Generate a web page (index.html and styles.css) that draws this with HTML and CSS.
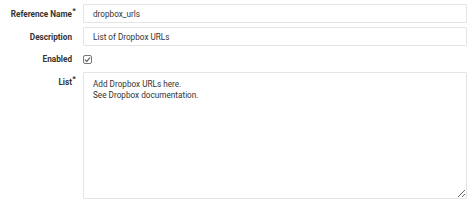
FILE: index.html
```html
<!DOCTYPE html>
<html lang="en">
<head>
    <meta charset="UTF-8">
    <title>Edit Reference</title>
    <link rel="stylesheet" href="styles.css">
</head>
<body>
    <form class="ref-form">
        <label class="field-label" for="ref-name">Reference Name<span class="req">*</span></label>
        <input class="field-input" id="ref-name" type="text" value="dropbox_urls">

        <label class="field-label" for="ref-desc">Description</label>
        <input class="field-input" id="ref-desc" type="text" value="List of Dropbox URLs">

        <label class="field-label" for="ref-enabled">Enabled</label>
        <div class="check-wrap">
            <span class="check-box" id="ref-enabled">
                <svg width="7" height="7" viewBox="0 0 8 8"><path d="M1 4.2 L3.1 6.2 L7 1.8" fill="none" stroke="#555" stroke-width="1.2"/></svg>
            </span>
        </div>

        <label class="field-label top" for="ref-list">List<span class="req">*</span></label>
        <textarea class="field-input field-area" id="ref-list">Add Dropbox URLs here.
See Dropbox documentation.</textarea>
    </form>
</body>
</html>
```

FILE: styles.css
```css
body {
    margin: 0;
    padding: 4px 7px 0 0;
    font-family: Roboto, 'Liberation Sans', sans-serif;
    color: #333;
    background: #fff;
}

.ref-form {
    display: grid;
    grid-template-columns: 76px 1fr;
    column-gap: 7px;
    row-gap: 4px;
}

.field-label {
    font-size: 8.2px;
    font-weight: bold;
    text-align: right;
    white-space: nowrap;
    align-self: center;
    padding-right: 4px;
    position: relative;
}

.field-label.top {
    align-self: start;
    padding-top: 5px;
}

.req {
    position: absolute;
    right: 0;
    top: -3px;
    font-size: 8px;
}

.field-label.top .req {
    top: 2px;
}

.field-input {
    box-sizing: border-box;
    height: 19px;
    border: 1px solid #e4e4e4;
    border-radius: 1px;
    padding: 0 9px;
    font-family: inherit;
    font-size: 8.2px;
    color: #333;
    outline: none;
    width: 100%;
}

.field-area {
    height: 127px;
    padding: 6px 9px;
    line-height: 11px;
    resize: vertical;
}

.check-wrap {
    height: 18px;
    display: flex;
    align-items: center;
}

.check-box {
    box-sizing: border-box;
    width: 9px;
    height: 9px;
    border: 1px solid #777;
    border-radius: 2px;
    display: flex;
    align-items: center;
    justify-content: center;
}
```
